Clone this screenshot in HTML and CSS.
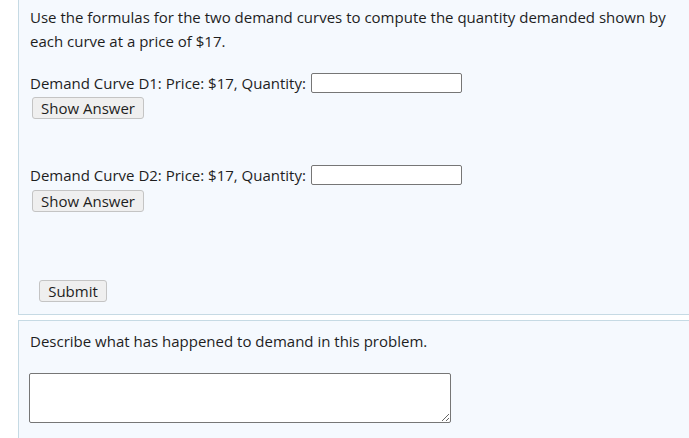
FILE: index.html
```html
<!DOCTYPE html>
<html>
<head>
<meta charset="utf-8">
<link rel="stylesheet" href="styles.css">
</head>
<body>
<div class="page">
  <section class="panel panel-q">
    <p class="intro">Use the formulas for the two demand curves to compute the quantity demanded shown by each curve at a price of $17.</p>
    <div class="row row-d1">
      <label class="label">Demand Curve D1: Price: $17, Quantity:</label>
      <input class="qty" type="text">
    </div>
    <button class="btn btn-show btn-show1" type="button">Show Answer</button>
    <div class="row row-d2">
      <label class="label">Demand Curve D2: Price: $17, Quantity:</label>
      <input class="qty" type="text">
    </div>
    <button class="btn btn-show btn-show2" type="button">Show Answer</button>
    <div class="submit-wrap">
      <button class="btn btn-submit" type="button">Submit</button>
    </div>
  </section>
  <section class="panel panel-d">
    <p class="describe">Describe what has happened to demand in this problem.</p>
    <textarea class="answer"></textarea>
  </section>
</div>
</body>
</html>
```
FILE: styles.css
```css
html, body {
  margin: 0;
  padding: 0;
  background: #ffffff;
  overflow: hidden;
}
body {
  font-family: "Open Sans", "DejaVu Sans", sans-serif;
  font-size: 15px;
  line-height: 24px;
  color: #1e1e1e;
}
.page {
  padding-left: 18px;
  margin-right: -20px;
}
.panel {
  background: #f5f9fe;
  border: 1px solid #c6dae4;
  padding-left: 11px;
  padding-right: 11px;
}
.panel-q {
  margin-top: -1px;
  padding-top: 5px;
  padding-bottom: 12px;
}
.intro {
  margin: 0;
  width: 655px;
}
.row {
  display: flex;
  align-items: center;
  height: 22px;
}
.row-d1 { margin-top: 19px; }
.row-d2 { margin-top: 45px; }
.label {
  white-space: nowrap;
}
.qty {
  box-sizing: border-box;
  width: 151px;
  height: 20px;
  margin: 0 0 0 5px;
  border: 1px solid #767676;
  border-radius: 2px;
  background: #ffffff;
  padding: 0 2px;
}
.btn {
  display: block;
  box-sizing: border-box;
  height: 22px;
  font-family: "Open Sans", "DejaVu Sans", sans-serif;
  font-size: 15px;
  line-height: 18px;
  color: #1e1e1e;
  background: #efefef;
  border: 1px solid #c4c4c4;
  border-radius: 3px;
  padding: 1px 6px;
}
.btn-show {
  margin-left: 2px;
  width: 112px;
}
.btn-show1 { margin-top: 3px; }
.btn-show2 { margin-top: 4px; }
.submit-wrap {
  margin-top: 68px;
  padding-left: 9px;
}
.btn-submit {
  width: 68px;
}
.panel-d {
  margin-top: 5px;
  padding-top: 8px;
  padding-bottom: 30px;
}
.describe {
  margin: 0;
}
.answer {
  display: block;
  box-sizing: border-box;
  width: 422px;
  height: 50px;
  margin: 20px 0 0 -1px;
  border: 1px solid #767676;
  border-radius: 2px;
  background: #ffffff;
}
```
